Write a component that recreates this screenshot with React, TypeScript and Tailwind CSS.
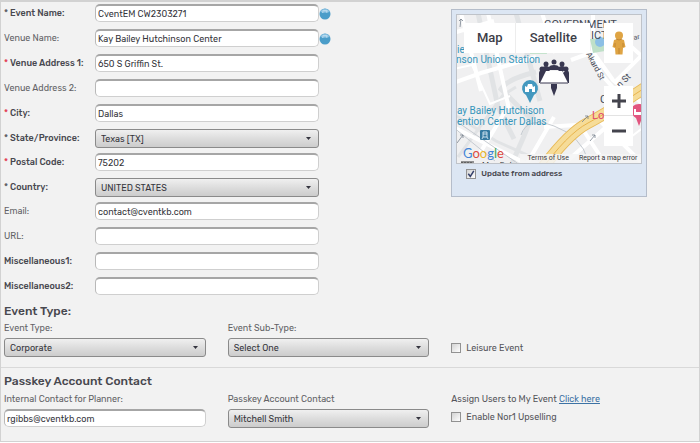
import React, { useState } from "react";
import clsx from "clsx";

type Required = "red" | "dark";

interface FieldInfo {
  id: string;
  label: string;
  value?: string;
  bold?: boolean;
  required?: Required;
  options?: string[];
  info?: boolean;
}

const fields: FieldInfo[] = [
  { id: "eventName", label: "Event Name:", value: "CventEM CW2303271", bold: true, required: "dark", info: true },
  { id: "venueName", label: "Venue Name:", value: "Kay Bailey Hutchinson Center", info: true },
  { id: "address1", label: "Venue Address 1:", value: "650 S Griffin St.", bold: true, required: "red" },
  { id: "address2", label: "Venue Address 2:" },
  { id: "city", label: "City:", value: "Dallas", bold: true, required: "red" },
  { id: "state", label: "State/Province:", bold: true, required: "dark", options: ["Texas [TX]"] },
  { id: "postal", label: "Postal Code:", value: "75202", bold: true, required: "red" },
  { id: "country", label: "Country:", bold: true, required: "dark", options: ["UNITED STATES"] },
  { id: "email", label: "Email:", value: "contact@cventkb.com" },
  { id: "url", label: "URL:" },
  { id: "misc1", label: "Miscellaneous1:", bold: true },
  { id: "misc2", label: "Miscellaneous2:", bold: true },
];

function TextInput({ id, value = "" }: { id: string; value?: string }) {
  const [text, setText] = useState(value);

  return (
    <input
      id={id}
      type="text"
      value={text}
      onChange={e => setText(e.target.value)}
      className="block h-[18px] w-full rounded-[5px] border border-t-2 border-[#cfcfcf] border-t-[#a6a6a6] border-l-[#b8b8b8] bg-white px-[2px] text-[#35353b] outline-none"
    />
  );
}

function SelectInput({ id, options }: { id: string; options: string[] }) {
  return (
    <div className="relative">
      <select
        id={id}
        className="block h-[19px] w-full appearance-none rounded-[3px] border border-[#8a8a8a] bg-linear-to-b from-[#f0f0f0] via-[#dddddd] to-[#cccccc] px-[5px] text-[#35353b] outline-none"
      >
        {options.map(option => (
          <option key={option}>{option}</option>
        ))}
      </select>
      <svg className="pointer-events-none absolute top-2 right-2 h-[3px] w-[5px]" viewBox="0 0 5 3">
        <path d="M0 0h5L2.500 3z" fill="#34343f" />
      </svg>
    </div>
  );
}

function CheckBox({ id, label, checked = false, bold }: { id: string; label: string; checked?: boolean; bold?: boolean }) {
  const [on, setOn] = useState(checked);

  return (
    <label htmlFor={id} className={clsx("flex items-center gap-[5px]", bold && "text-[8px] font-medium")}>
      <span className="relative">
        <input
          id={id}
          type="checkbox"
          checked={on}
          onChange={e => setOn(e.target.checked)}
          className="block size-[10px] appearance-none border border-[#929292] bg-linear-to-br from-[#d3d3d3] to-white"
        />
        {on && (
          <svg className="pointer-events-none absolute top-0 left-0 size-[10px]" viewBox="0 0 10 10">
            <path d="M2.300 4.800l2 2.700L7.800 1.800" fill="none" stroke="#34406b" strokeWidth="1.500" />
          </svg>
        )}
      </span>
      {label}
    </label>
  );
}

function InfoIcon() {
  return (
    <svg className="size-3 shrink-0" viewBox="0 0 12 12">
      <circle cx="6" cy="6" r="5.500" fill="#4b9dc9" />
      <path d="M1.200 4a5.200 5.200 0 0 1 9.600 0Q6 5.500 1.200 4z" fill="#86bfe0" />
      <path d="M3.500 2.800h5M3 4.200h1.500M7 4h1.500" stroke="#dceefa" strokeWidth=".8" />
    </svg>
  );
}

function FieldRow({ field }: { field: FieldInfo }) {
  const { id, label, value, bold, required, options, info } = field;

  return (
    <div className={clsx("flex items-start", options ? "h-6" : "h-[25px]")}>
      <label
        htmlFor={id}
        className={clsx("w-[91px] shrink-0 leading-[19px] whitespace-nowrap", bold ? "font-medium text-[#48484f]" : "text-[#626266]")}
      >
        {required && <span className={clsx("pr-[2px]", required === "red" ? "text-[#e23a52]" : "text-[#5a5a60]")}>*</span>}
        {label}
      </label>
      <div className="w-1/2 shrink-0">
        {options ? <SelectInput id={id} options={options} /> : <TextInput id={id} value={value} />}
      </div>
      {info && (
        <div className="flex h-5 items-center">
          <InfoIcon />
        </div>
      )}
    </div>
  );
}

function StackedField({ id, label, children }: { id: string; label: string; children: React.ReactNode }) {
  return (
    <div className="pr-[22px]">
      <label htmlFor={id} className="mb-[2px] block h-4 leading-4 text-[#626266]">
        {label}
      </label>
      {children}
    </div>
  );
}

function MapDrawing() {
  return (
    <svg className="block h-[148px] w-full" viewBox="0 0 186 148" preserveAspectRatio="xMidYMin slice" fontFamily="Roboto, sans-serif">
      <rect width="187" height="150" fill="#f0f0f1" />
      <g fill="none" stroke="#e1e3e5" strokeWidth="5">
        <path d="M22-2l20 94 16 32M60-2l24 88M75 104L45 74Q51 64 80 57M77 98l-9 23-14 32" />
        <path d="M-4 98l44 28 60 27M2 142L47 80l13-8" strokeWidth="3" />
      </g>
      <g fill="none" stroke="#fff" strokeWidth="4">
        <path d="M-3 18L38 6M-3 68l28-10L80 42M5-2l20 78M32-2l21 96M86-2l13 40M115 45l22-8 20 28 30 24M160 66l30-30M137-2v38l8 23 14 16M124 110l28 43M142 104l45 45M103 153l54-47 32-38M-3 112l80 40M88 112l32-2M70 150l28-48M50 95L24 138M151 10l37 33" />
        <path d="M-2 54l18-4 18 39 20-8M171 125l17-13" strokeWidth="2" />
      </g>
      <path d="M-3 104l67 46M-3 112l42 34M65 120Q71 101 98 111t34 34" fill="none" stroke="#c5cad0" strokeWidth="1" />
      <path d="M134 24l17-2 4 13-18 3z" fill="#bfe0c8" />
      <circle cx="144" cy="27" r="5" fill="#8cbfe5" />
      <path d="M72 35l18-2 1 6H74z" fill="#c5e3cd" />
      <path d="M83 158Q111 119 132 108T190 72" fill="none" stroke="#e7b957" strokeWidth="12" />
      <path d="M83 158Q111 119 132 108T190 72" fill="none" stroke="#f6dc98" strokeWidth="10" />
      <path d="M83 158Q111 119 132 108T190 72" fill="none" stroke="#e9b44c" strokeWidth="1" />
      <g fill="none" stroke="#77828e" strokeWidth=".8">
        <path d="M4 12l1-8m-2 2l2-2 2 2M1 128l6-8m-3 0l3 0v3M126 107l6-6m-3 0h3v3M134 126l5-6m-3 0h3v3" />
      </g>
      <g fontSize="10" fill="#3595bb">
        <text x="1" y="38">ie Bonnes</text>
        <text x="0" y="48">nson Union Station</text>
        <text x="1" y="99">ay Bailey Hutchison</text>
        <text x="1" y="110">ention Center Dallas</text>
      </g>
      <g fontSize="11" fill="#454a57">
        <text x="88" y="13">GOVERNMENT</text>
        <text x="135" y="24">ICT</text>
        <text x="144" y="88">C</text>
        <text transform="translate(130 39) rotate(62)" fontSize="8">Akard St</text>
        <text transform="translate(164 73) rotate(-44)" fontSize="9">n St</text>
        <text transform="translate(178 25) rotate(-12)" fontSize="7">ar</text>
      </g>
      <text x="136" y="104" fontSize="11" fill="#df456f">Lo</text>
      <path d="M183 111l-3-8c-7-4-6-14 3-14s10 10 3 14z" fill="#e2557f" />
      <path d="M178 94v6h8v-3h-6v-3z" fill="#fff" />
      <path d="M74 88l-4-8a8 8 0 1 1 8 0z" fill="#4398bf" />
      <path d="M69 77v-6l2 1 1-3h4l1 3 2-1v6h-3v-3h-3v3z" fill="#fff" />
      <rect x="24" y="115" width="10" height="10" rx="1" fill="#367aa1" />
      <path d="M27 117h4v5h-4zM26 124l1-2m5 2l-1-2M27 119h4" fill="none" stroke="#e8f5fc" strokeWidth=".8" />
      <g fill="#383750">
        <circle cx="98" cy="47" r="2.500" />
        <circle cx="90" cy="49" r="2.500" />
        <circle cx="106" cy="49" r="2.500" />
        <circle cx="86" cy="54" r="2.500" />
        <circle cx="110" cy="54" r="2.500" />
        <path d="M93 55v-3q1-2 5-2t5 2v3zM86 55q0-4 4-4t4 4l-3 4zM102 55q0-4 4-4t4 4l-4 4zM83 68V58q0-3 4-3l3 2-5 11zM113 68V58q0-3-4-3l-3 2 5 11zM95 69h6v4l-3 8-3-8z" />
      </g>
      <path d="M90 56h16l6 12H84z" fill="#fff" />
      <path d="M84 68h28" stroke="#383750" strokeWidth="1" />
      <rect x="64" y="139" width="124" height="10" fill="#f5f5f5" fillOpacity=".85" />
      <text x="7" y="143" fontSize="13" fontFamily="Lato, sans-serif">
        <tspan fill="#4285d6">G</tspan>
        <tspan fill="#df4b3f">o</tspan>
        <tspan fill="#edb72f">o</tspan>
        <tspan fill="#4285d6">g</tspan>
        <tspan fill="#37a45a">l</tspan>
        <tspan fill="#df4b3f">e</tspan>
      </text>
      <path d="M5 147h13M6 147v3m3-3v3m3-3v3m3-3v3" stroke="#333" fill="none" />
      <text x="26" y="152" fontSize="8" fill="#38383d">
        Map Data
      </text>
    </svg>
  );
}

function VenueMap() {
  return (
    <div className="w-[196px] border border-[#b5bdca] bg-[#dce6f3] p-1">
      <div className="relative overflow-hidden border border-[#bfc3c9] font-[Roboto,sans-serif]">
        <MapDrawing />
        <div className="absolute top-2 left-[7px] flex h-[30px] bg-white text-[13px] font-medium text-[#3d3d47]">
          <button type="button" className="w-[52px] border-r border-[#ededed]">
            Map
          </button>
          <button type="button" className="w-[74px]">
            Satellite
          </button>
        </div>
        <button type="button" aria-label="Street View" className="absolute top-2 right-2 flex h-10 w-[29px] items-center justify-center bg-white">
          <svg className="h-6 w-[14px]" viewBox="0 0 14 24">
            <circle cx="7" cy="4.500" r="4" fill="#dfa443" />
            <path d="M2 9q5-2 10 0l1.500 7-2.500 1-.5 6.500H3.500L3 17l-2.500-1z" fill="#dfa443" />
            <path d="M4 8q3 2 6 0M3 12v4M11 12v4M7 17v6" stroke="#b97e2d" fill="none" strokeWidth=".8" />
          </svg>
        </button>
        <div className="absolute top-[71px] right-2 flex w-[29px] flex-col bg-white">
          <button type="button" aria-label="Zoom in" className="flex h-[30px] items-center justify-center border-b border-[#e3e3e3]">
            <svg className="size-[14px]" viewBox="0 0 14 14">
              <path d="M7 0v14M0 7h14" stroke="#44444d" strokeWidth="3" />
            </svg>
          </button>
          <button type="button" aria-label="Zoom out" className="flex h-[30px] items-center justify-center">
            <svg className="size-[14px]" viewBox="0 0 14 14">
              <path d="M0 7h14" stroke="#44444d" strokeWidth="3" />
            </svg>
          </button>
        </div>
        <div className="absolute right-1 bottom-0 flex gap-[10px] text-[7px] leading-[10px] whitespace-nowrap text-[#38383d]">
          <a href="#terms">Terms of Use</a>
          <a href="#report">Report a map error</a>
        </div>
      </div>
      <div className="h-7 pt-[2px] pl-[10px] text-[#45454c]">
        <CheckBox id="updateAddress" label="Update from address" checked bold />
      </div>
    </div>
  );
}

export default function App() {
  return (
    <form className="border-t-2 border-r border-b border-l border-[#d2d2d2] bg-[#f2f2f2] font-[Rubik,Roboto,sans-serif] text-[9px] leading-4 text-[#55555a]">
      <section className="grid grid-cols-3 pt-[2px] pr-6 pl-[3px]">
        <div className="col-span-2">
          {fields.map(field => (
            <FieldRow key={field.id} field={field} />
          ))}
        </div>
        <div className="pt-[5px]">
          <VenueMap />
        </div>
      </section>

      <section className="border-b border-[#d9d9d9] pr-6 pb-[10px] pl-[3px]">
        <h2 className="h-[18px] text-[12px] leading-[18px] font-medium text-[#48484f]">Event Type:</h2>
        <div className="grid grid-cols-3">
          <StackedField id="eventType" label="Event Type:">
            <SelectInput id="eventType" options={["Corporate"]} />
          </StackedField>
          <StackedField id="subType" label="Event Sub-Type:">
            <SelectInput id="subType" options={["Select One"]} />
          </StackedField>
          <div className="pt-5">
            <CheckBox id="leisure" label="Leisure Event" />
          </div>
        </div>
      </section>

      <section className="pt-[3px] pr-6 pb-[13px] pl-[3px]">
        <h2 className="h-5 text-[12px] leading-5 font-medium text-[#48484f]">Passkey Account Contact</h2>
        <div className="grid grid-cols-3">
          <StackedField id="planner" label="Internal Contact for Planner:">
            <TextInput id="planner" value="rgibbs@cventkb.com" />
          </StackedField>
          <StackedField id="passkey" label="Passkey Account Contact">
            <SelectInput id="passkey" options={["Mitchell Smith"]} />
          </StackedField>
          <div>
            <p className="mb-[2px] h-4 whitespace-nowrap">
              Assign Users to My Event{" "}
              <a href="#assign" className="text-[#3d73a5] underline">
                Click here
              </a>
            </p>
            <CheckBox id="upselling" label="Enable Nor1 Upselling" />
          </div>
        </div>
      </section>
    </form>
  );
}
